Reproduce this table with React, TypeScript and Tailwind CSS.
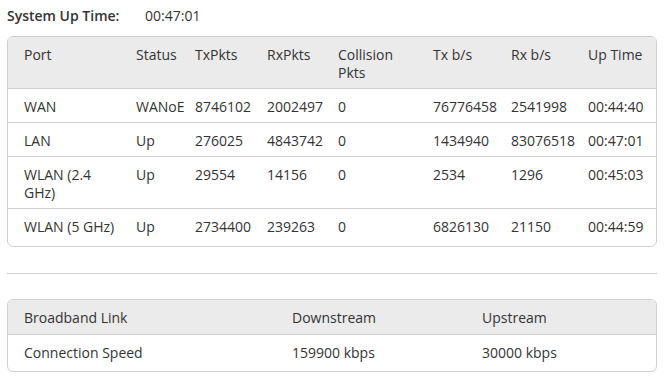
import React from 'react';

const ports = [
  { port: 'WAN', status: 'WANoE', tx: '8746102', rx: '2002497', col: '0', txb: '76776458', rxb: '2541998', up: '00:44:40' },
  { port: 'LAN', status: 'Up', tx: '276025', rx: '4843742', col: '0', txb: '1434940', rxb: '83076518', up: '00:47:01' },
  { port: 'WLAN (2.4 GHz)', status: 'Up', tx: '29554', rx: '14156', col: '0', txb: '2534', rxb: '1296', up: '00:45:03' },
  { port: 'WLAN (5 GHz)', status: 'Up', tx: '2734400', rx: '239263', col: '0', txb: '6826130', rxb: '21150', up: '00:44:59' },
];

const heads = ['Port', 'Status', 'TxPkts', 'RxPkts', 'Collision Pkts', 'Tx b/s', 'Rx b/s', 'Up Time'];
const widths = [124, 59, 72, 71, 95, 78, 77, 72];

export default function App() {
  return (
    <div className="w-[667px] h-[379px] bg-white px-[7px] text-[14px] leading-[18px] text-[#333]" style={{ fontFamily: '"Open Sans", sans-serif' }}>
      <div className="flex pt-[7px] h-[36px]">
        <span className="w-[138px] font-semibold">System Up Time:</span>
        <span>00:47:01</span>
      </div>

      {/* Port statistics */}
      <div className="w-[650px] border border-[#d0d0d0] rounded-[6px] overflow-hidden pb-1">
        <table className="w-full table-fixed border-collapse">
          <colgroup>
            {widths.map((w, i) => (
              <col key={i} style={{ width: w }} />
            ))}
          </colgroup>
          <thead>
            <tr className="bg-[#ebebeb] border-b border-[#d0d0d0]">
              {heads.map((h, i) => (
                <th key={h} className={`text-left font-normal align-top pt-[9px] pb-[6px] ${i === 0 ? 'pl-4 pr-3' : 'pl-1 pr-3'}`}>
                  {h}
                </th>
              ))}
            </tr>
          </thead>
          <tbody>
            {ports.map((r, idx) => (
              <tr key={r.port} className={idx < ports.length - 1 ? 'border-b border-[#d0d0d0]' : ''}>
                {[r.port, r.status, r.tx, r.rx, r.col, r.txb, r.rxb, r.up].map((v, i) => (
                  <td key={i} className={`align-top pt-[9px] pb-[6px] whitespace-normal ${i === 0 ? 'pl-4 pr-3' : 'pl-1 pr-0'}`}>
                    {v}
                  </td>
                ))}
              </tr>
            ))}
          </tbody>
        </table>
      </div>

      <div className="w-[650px] border-t border-[#d0d0d0] mt-[26px] mb-[25px]" />

      {/* Broadband link */}
      <div className="w-[650px] border border-[#d0d0d0] rounded-[6px] overflow-hidden pb-[2px]">
        <div className="grid grid-cols-[280px_190px_178px] bg-[#ebebeb] border-b border-[#d0d0d0]">
          <div className="pl-4 pt-[9px] pb-[7px]">Broadband Link</div>
          <div className="pl-1 pt-[9px] pb-[7px]">Downstream</div>
          <div className="pl-1 pt-[9px] pb-[7px]">Upstream</div>
        </div>
        <div className="grid grid-cols-[280px_190px_178px]">
          <div className="pl-4 pt-[9px] pb-[7px]">Connection Speed</div>
          <div className="pl-1 pt-[9px] pb-[7px]">159900 kbps</div>
          <div className="pl-1 pt-[9px] pb-[7px]">30000 kbps</div>
        </div>
      </div>
    </div>
  );
}
